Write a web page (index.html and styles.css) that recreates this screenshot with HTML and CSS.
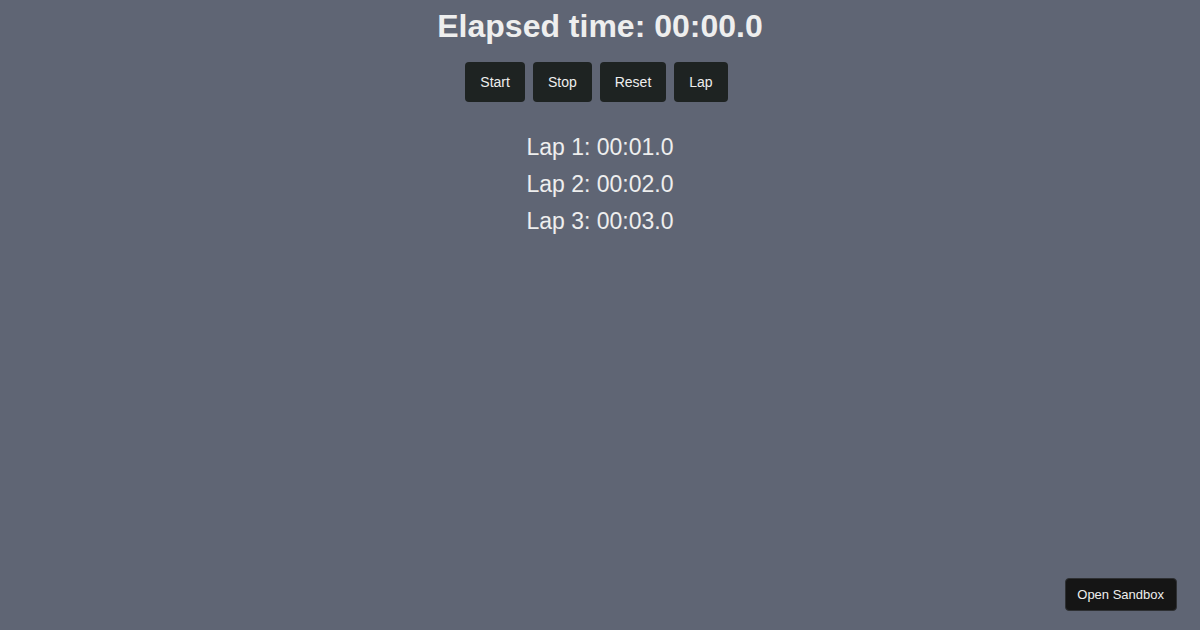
FILE: index.html
```html
<!DOCTYPE html>
<html lang="en">
<head>
<meta charset="utf-8">
<title>Stopwatch</title>
<link rel="stylesheet" href="styles.css">
</head>
<body>
  <main class="stopwatch">
    <h1 class="elapsed">Elapsed time: 00:00.0</h1>
    <div class="controls">
      <button class="btn">Start</button>
      <button class="btn">Stop</button>
      <button class="btn">Reset</button>
      <button class="btn">Lap</button>
    </div>
    <ul class="laps">
      <li class="lap">Lap 1: 00:01.0</li>
      <li class="lap">Lap 2: 00:02.0</li>
      <li class="lap">Lap 3: 00:03.0</li>
    </ul>
  </main>
  <a class="sandbox-link" href="#">Open Sandbox</a>
</body>
</html>
```
FILE: styles.css
```css
html, body {
  margin: 0;
  padding: 0;
  height: 100%;
}

body {
  background: #5f6574;
  color: #eeeeee;
  font-family: "Liberation Sans", Arial, sans-serif;
}

.stopwatch {
  display: flex;
  flex-direction: column;
  align-items: center;
  padding-top: 8px;
}

.elapsed {
  margin: 0;
  font-size: 32px;
  font-weight: bold;
  line-height: 37px;
  color: #eeeeee;
}

/* each button carries a trailing 8px gap, so the row sits slightly left of centre */
.controls {
  display: flex;
  margin-top: 17px;
  padding-left: 1px;
}

.btn {
  height: 40px;
  margin-right: 8px;
  padding: 0 15px;
  border: none;
  border-radius: 4px;
  background: #1e2322;
  color: #eeeeee;
  font-family: "Liberation Sans", Arial, sans-serif;
  font-size: 14px;
}

.laps {
  list-style: none;
  margin: 27px 0 0;
  padding: 0;
  text-align: center;
}

.lap {
  font-size: 23px;
  line-height: 37px;
}

.sandbox-link {
  position: fixed;
  right: 23px;
  bottom: 19px;
  display: flex;
  align-items: center;
  height: 31px;
  padding: 0 12px 0 11px;
  border: 1px solid #2e3033;
  border-radius: 4px;
  background: #151515;
  color: #eeeeee;
  font-size: 13px;
  text-decoration: none;
}
```
